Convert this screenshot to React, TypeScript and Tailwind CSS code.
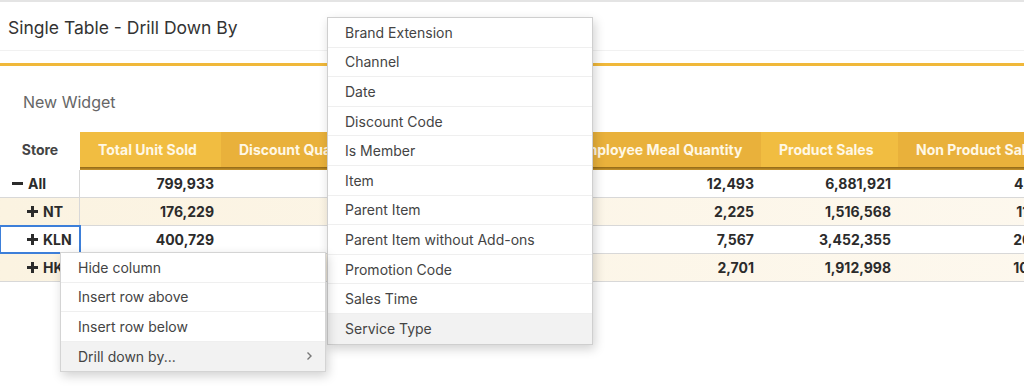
import React from "react";

type Col = { label: string; width: number; dark: boolean };

const cols: Col[] = [
  { label: "Total Unit Sold", width: 141, dark: false },
  { label: "Discount Quantity", width: 179, dark: true },
  { label: "Refund Quantity", width: 158, dark: false },
  { label: "Employee Meal Quantity", width: 203, dark: true },
  { label: "Product Sales", width: 137, dark: false },
  { label: "Non Product Sales", width: 178, dark: true },
];

type Row = { label: string; expanded: boolean; level: number; cream: boolean; selected?: boolean; values: string[] };

// cells hidden under the open menus are left empty
const rows: Row[] = [
  { label: "All", expanded: true, level: 0, cream: false, values: ["799,933", "", "", "12,493", "6,881,921", "421,870"] },
  { label: "NT", expanded: false, level: 1, cream: true, values: ["176,229", "", "", "2,225", "1,516,568", "116,930"] },
  { label: "KLN", expanded: false, level: 1, cream: false, selected: true, values: ["400,729", "", "", "7,567", "3,452,355", "205,314"] },
  { label: "HK", expanded: false, level: 1, cream: true, values: ["", "", "", "2,701", "1,912,998", "100,626"] },
];

const drillItems = [
  "Brand Extension",
  "Channel",
  "Date",
  "Discount Code",
  "Is Member",
  "Item",
  "Parent Item",
  "Parent Item without Add-ons",
  "Promotion Code",
  "Sales Time",
  "Service Type",
];

const contextItems = ["Hide column", "Insert row above", "Insert row below", "Drill down by..."];

function ToggleIcon({ expanded }: { expanded: boolean }) {
  return (
    <svg width="11" height="11" viewBox="0 0 11 11" className="shrink-0">
      <rect x="0" y="4" width="11" height="3" fill="#2b2b2b" />
      {!expanded && <rect x="4" y="0" width="3" height="11" fill="#2b2b2b" />}
    </svg>
  );
}

export default function App() {
  return (
    <div className="relative w-[1024px] h-[390px] overflow-hidden bg-white font-['Inter',sans-serif] text-[#333]">
      <div className="border-t-2 border-[#e4e4e4]" />
      <div className="h-[49px] pt-[4px] flex items-center px-2 text-[17.5px] text-[#333] border-b border-[#f1f1f1]">
        Single Table - Drill Down By
      </div>
      <div className="h-[12px]" />
      <div className="h-[3px] bg-[#f0b83a]" />
      <div className="h-[66px] pt-[6px] flex items-center pl-[23px] text-[16px] text-[#666]">New Widget</div>

      {/* table */}
      <div className="flex flex-col w-max">
        <div className="flex h-[38px]">
          <div className="w-[80px] h-[35px] flex items-center justify-center text-[14px] font-bold text-[#444] bg-white">
            Store
          </div>
          {cols.map((c) => (
            <div key={c.label} className="flex flex-col" style={{ width: c.width }}>
              <div
                className={`h-[35px] flex items-center px-[18px] whitespace-nowrap overflow-hidden text-[14px] font-bold text-[#fff8e6] ${
                  c.dark ? "bg-[#e9b13b]" : "bg-[#f1bd41]"
                }`}
              >
                {c.label}
              </div>
              <div className="h-[3px] bg-gradient-to-b from-[#8f6716] to-[#c9962e]" />
            </div>
          ))}
        </div>
        {rows.map((r) => (
          <div
            key={r.label}
            className={`flex h-[28px] border-b border-[#d8d8d8] text-[14px] font-bold text-[#2b2b2b] ${
              r.cream ? "bg-gradient-to-r from-[#fbf3e1] to-[#fdf8ee]" : "bg-white"
            }`}
          >
            <div
              className={`w-[80px] flex items-center gap-[5px] border-r border-[#d8d8d8] ${
                r.level === 0 ? "pl-[12px]" : "pl-[27px]"
              } ${r.selected ? "outline-2 outline-[#3d7fd9] -outline-offset-1" : ""}`}
            >
              <ToggleIcon expanded={r.expanded} />
              <span>{r.label}</span>
            </div>
            {cols.map((c, i) => (
              <div key={c.label} className="flex items-center justify-end pr-[6px]" style={{ width: c.width - (i === 0 ? 1 : 0) }}>
                {r.values[i]}
              </div>
            ))}
          </div>
        ))}
      </div>

      {/* drill down submenu */}
      <div className="absolute left-[327px] top-[17px] w-[266px] bg-white border border-[#cfcfcf] shadow-[2px_4px_10px_rgba(0,0,0,0.18)]">
        {drillItems.map((item, i) => (
          <div
            key={item}
            className={`h-[29.6px] flex items-center pl-[17px] text-[14px] text-[#444] ${
              i < drillItems.length - 1 ? "border-b border-[#efefef]" : ""
            } ${item === "Service Type" ? "bg-[#f2f2f2]" : ""}`}
          >
            {item}
          </div>
        ))}
      </div>

      {/* context menu */}
      <div className="absolute left-[60px] top-[252px] w-[266px] bg-white border border-[#d4d4d4] shadow-[2px_4px_10px_rgba(0,0,0,0.18)]">
        {contextItems.map((item, i) => (
          <div
            key={item}
            className={`h-[29.5px] flex items-center justify-between pl-[17px] pr-[12px] text-[14px] text-[#444] ${
              i < contextItems.length - 1 ? "border-b border-[#efefef]" : "bg-[#f2f2f2]"
            }`}
          >
            <span>{item}</span>
            {i === contextItems.length - 1 && (
              <svg width="7" height="10" viewBox="0 0 7 10">
                <path d="M1.5 1.5 L5 5 L1.5 8.5" fill="none" stroke="#777" strokeWidth="1.4" />
              </svg>
            )}
          </div>
        ))}
      </div>
    </div>
  );
}
